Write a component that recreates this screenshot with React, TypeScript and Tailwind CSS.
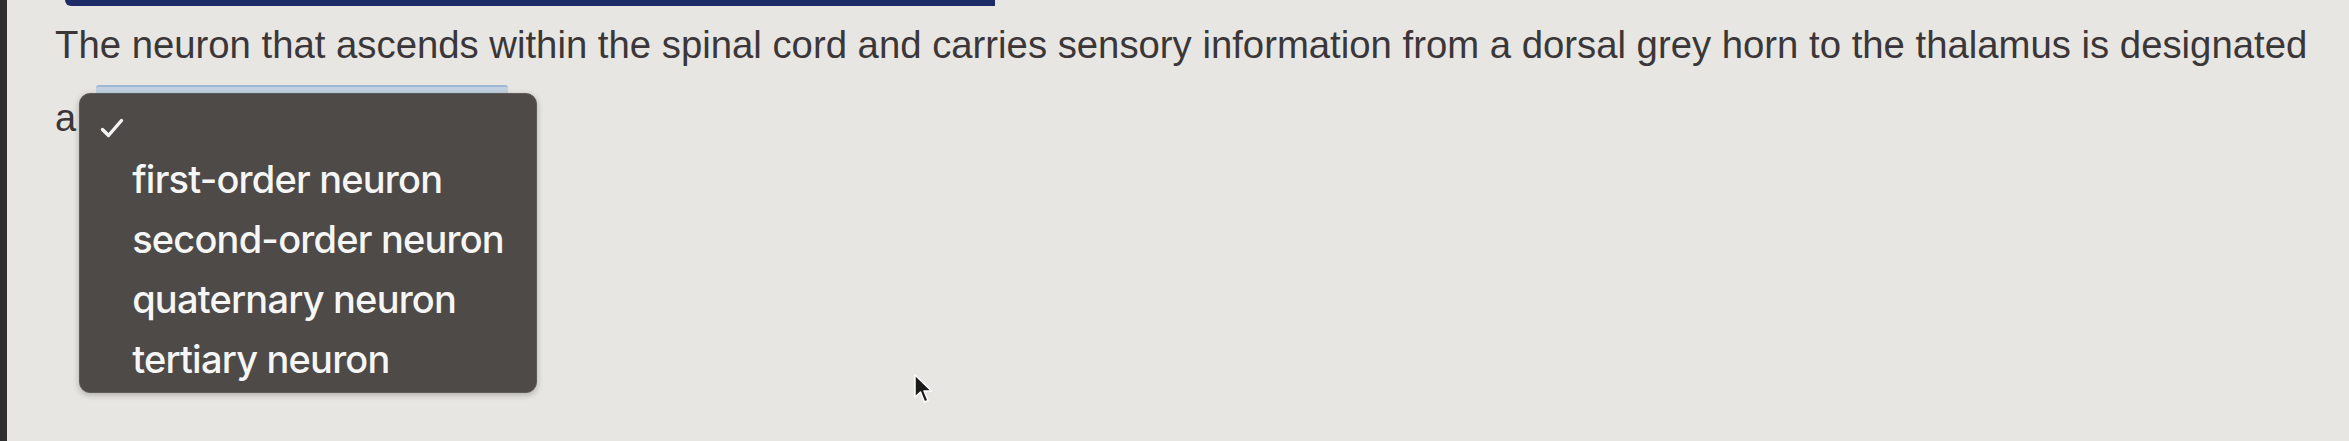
import React from "react";

const options = [
  "first-order neuron",
  "second-order neuron",
  "quaternary neuron",
  "tertiary neuron",
];

export default function App() {
  return (
    <div className="relative flex h-[441px] w-[2349px] overflow-hidden bg-[#e7e6e2]">
      <div className="h-full w-[7px] shrink-0 bg-[#2e2e2e]" />
      <div className="flex flex-1 flex-col">
        <div className="ml-[58px] h-[6px] w-[930px] rounded-bl-[8px] bg-[#1d2c66]" />
        <p
          className="ml-[48px] mt-[19px] whitespace-nowrap text-[38.3px] leading-[40px] text-[#3b3739]"
          style={{ fontFamily: '"Liberation Sans", Arial, sans-serif' }}
        >
          The neuron that ascends within the spinal cord and carries sensory information from a dorsal grey horn to the
          thalamus is designated
        </p>
        <div className="ml-[48px] mt-[20px] flex items-start">
          <span
            className="mt-[13px] text-[38px] leading-[40px] text-[#3b3739]"
            style={{ fontFamily: '"Liberation Sans", Arial, sans-serif' }}
          >
            a
          </span>
          <div className="relative ml-[20px] h-[40px] w-[412px] rounded-t-[3px] border-t-2 border-[#9fb8d3] bg-[#c2d2e2]">
            <div className="absolute left-[-17px] top-[6px] h-[300px] w-[458px] rounded-[11px] border border-[#5e5b59] bg-[#4d4a48] pt-[12px] shadow-[0_2px_6px_rgba(0,0,0,0.25)]">
              <div className="flex h-[43px] items-center pl-[20px]">
                <svg width="24" height="20" viewBox="0 0 24 20" fill="none">
                  <path
                    d="M2.5 11.5 L8.5 17.5 L21.5 2.5"
                    stroke="#f4f4f4"
                    strokeWidth="3.4"
                    strokeLinecap="round"
                    strokeLinejoin="round"
                  />
                </svg>
              </div>
              <ul
                className="flex flex-col"
                style={{ fontFamily: 'Inter, "Noto Sans", sans-serif' }}
              >
                {options.map((o) => (
                  <li
                    key={o}
                    className="flex h-[60px] items-center pl-[52px] text-[38px] font-medium tracking-[-0.8px] text-[#f6f6f6]"
                  >
                    {o}
                  </li>
                ))}
              </ul>
            </div>
          </div>
        </div>
      </div>
      <svg
        className="absolute left-[913px] top-[373px]"
        width="22"
        height="32"
        viewBox="0 0 22 32"
      >
        <path
          d="M2 2 L2 24 L7.5 19 L11.5 29 L15 27.5 L11 18 L18.5 18 Z"
          fill="#1a1a1a"
          stroke="#ffffff"
          strokeWidth="1.5"
          strokeLinejoin="round"
        />
      </svg>
    </div>
  );
}
